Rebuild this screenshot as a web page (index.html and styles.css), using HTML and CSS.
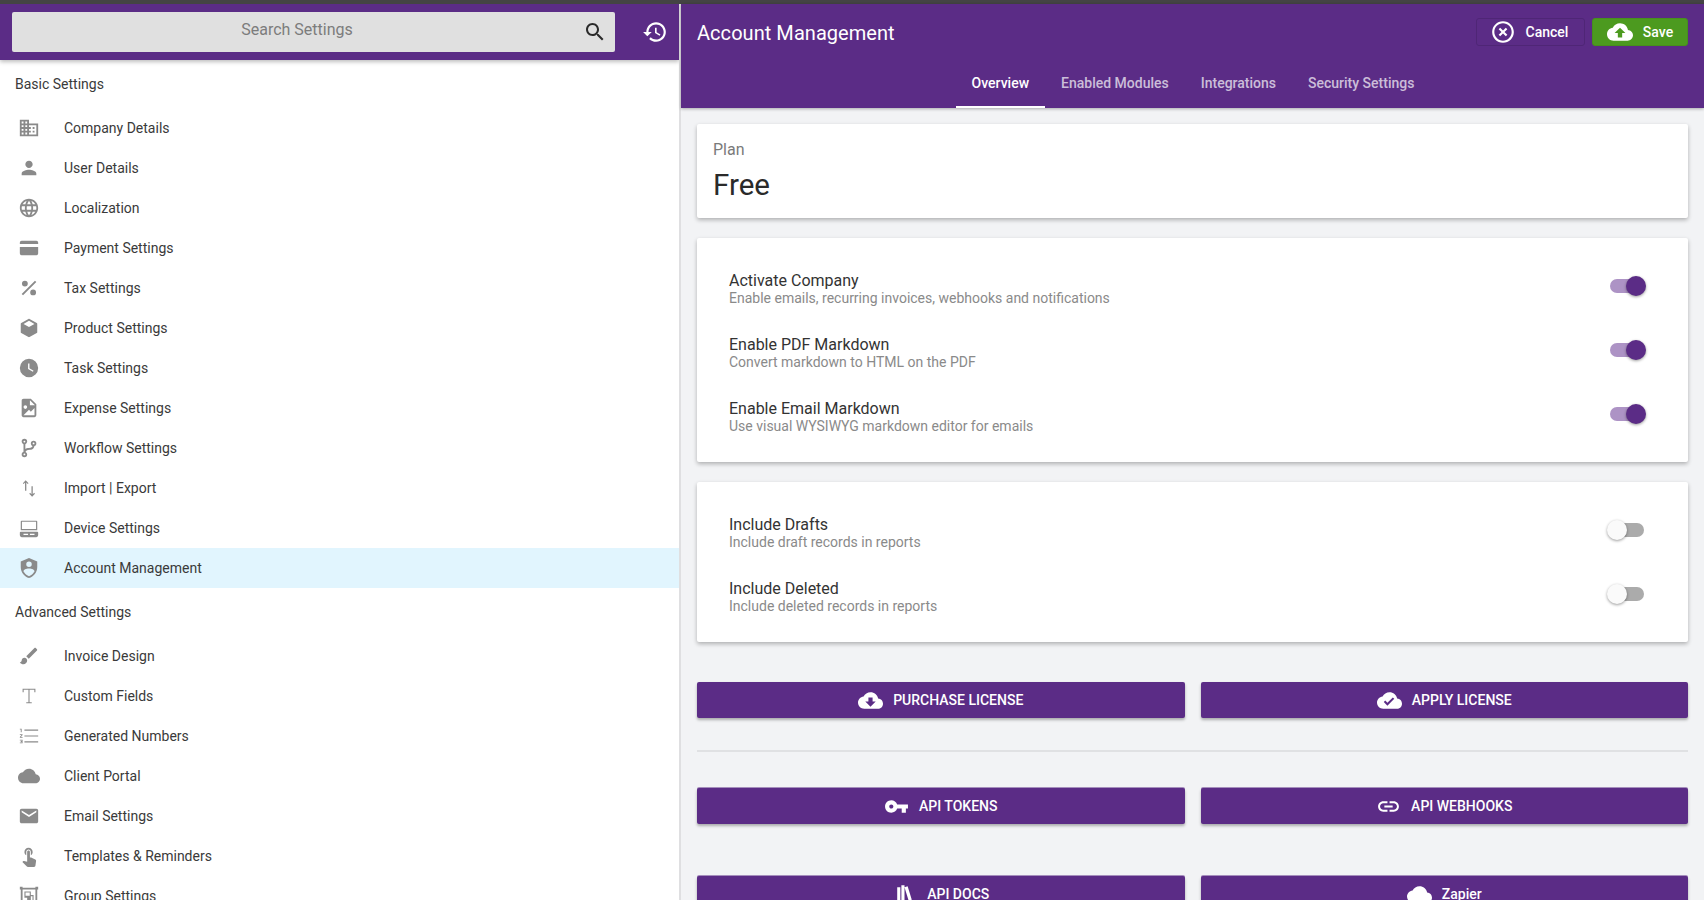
FILE: index.html
```html
<!DOCTYPE html>
<html lang="en">
<head>
<meta charset="utf-8">
<title>Account Management</title>
<link rel="stylesheet" href="styles.css">
</head>
<body>
<div class="topstrip"></div>
<div class="app">
  <aside class="side">
    <header class="side-head">
      <div class="search">
        <span class="search-text">Search Settings</span>
        <svg class="search-icon" viewBox="0 0 24 24"><path d="M15.5 14h-.79l-.28-.27C15.41 12.59 16 11.11 16 9.5 16 5.91 13.09 3 9.5 3S3 5.91 3 9.5 5.91 16 9.5 16c1.61 0 3.09-.59 4.23-1.57l.27.28v.79l5 4.99L20.49 19l-4.99-5zm-6 0C7.01 14 5 11.99 5 9.5S7.01 5 9.5 5 14 7.01 14 9.5 11.99 14 9.5 14z"/></svg>
      </div>
      <svg class="history" viewBox="0 0 24 24"><path d="M13 3c-4.97 0-9 4.03-9 9H1l3.89 3.89.07.14L9 12H6c0-3.87 3.13-7 7-7s7 3.13 7 7-3.13 7-7 7c-1.93 0-3.68-.79-4.94-2.06l-1.42 1.42C8.27 19.99 10.51 21 13 21c4.97 0 9-4.03 9-9s-4.03-9-9-9zm-1 5v5l4.28 2.54.72-1.21-3.5-2.08V8H12z"/></svg>
    </header>
    <h2 class="section first">Basic Settings</h2>
    <nav class="list">
      <div class="item"><svg class="ico" viewBox="0 0 24 24"><path d="M12 7V3H2v18h20V7H12zM6 19H4v-2h2v2zm0-4H4v-2h2v2zm0-4H4V9h2v2zm0-4H4V5h2v2zm4 12H8v-2h2v2zm0-4H8v-2h2v2zm0-4H8V9h2v2zm0-4H8V5h2v2zm10 12h-8v-2h2v-2h-2v-2h2v-2h-2V9h8v10zm-2-8h-2v2h2v-2zm0 4h-2v2h2v-2z"/></svg>Company Details</div>
      <div class="item"><svg class="ico" viewBox="0 0 24 24"><path d="M12 12c2.21 0 4-1.79 4-4s-1.79-4-4-4-4 1.79-4 4 1.79 4 4 4zm0 2c-2.67 0-8 1.34-8 4v2h16v-2c0-2.66-5.33-4-8-4z"/></svg>User Details</div>
      <div class="item"><svg class="ico" viewBox="0 0 24 24"><path d="M11.99 2C6.47 2 2 6.48 2 12s4.47 10 9.99 10C17.52 22 22 17.52 22 12S17.52 2 11.99 2zm6.93 6h-2.95c-.32-1.25-.78-2.45-1.38-3.56 1.84.63 3.37 1.91 4.33 3.56zM12 4.04c.83 1.2 1.48 2.53 1.91 3.96h-3.82c.43-1.43 1.08-2.76 1.91-3.96zM4.26 14C4.1 13.36 4 12.69 4 12s.1-1.36.26-2h3.38c-.08.66-.14 1.32-.14 2 0 .68.06 1.34.14 2H4.26zm.82 2h2.95c.32 1.25.78 2.45 1.38 3.56-1.84-.63-3.37-1.9-4.33-3.56zm2.95-8H5.08c.96-1.66 2.49-2.93 4.33-3.56C8.81 5.55 8.35 6.75 8.03 8zM12 19.96c-.83-1.2-1.48-2.53-1.91-3.96h3.82c-.43 1.43-1.08 2.76-1.91 3.96zM14.34 14H9.66c-.09-.66-.16-1.32-.16-2 0-.68.07-1.35.16-2h4.68c.09.65.16 1.32.16 2 0 .68-.07 1.34-.16 2zm.25 5.56c.6-1.11 1.06-2.31 1.38-3.56h2.95c-.96 1.65-2.49 2.93-4.33 3.56zM16.36 14c.08-.66.14-1.32.14-2 0-.68-.06-1.34-.14-2h3.38c.16.64.26 1.31.26 2s-.1 1.36-.26 2h-3.38z"/></svg>Localization</div>
      <div class="item"><svg class="ico" viewBox="0 0 24 24"><path d="M4 4h16a2 2 0 0 1 2 2v1.600H2V6a2 2 0 0 1 2-2zM2 11h20v7a2 2 0 0 1-2 2H4a2 2 0 0 1-2-2z"/></svg>Payment Settings</div>
      <div class="item"><svg class="ico" viewBox="0 0 24 24"><path d="M18.500 4l1.500 1.500L5.500 20 4 18.500zM7.500 4a3.200 3.200 0 1 1 0 6.400 3.200 3.200 0 0 1 0-6.400zM16.500 13.600a3.200 3.200 0 1 1 0 6.400 3.200 3.200 0 0 1 0-6.400z"/></svg>Tax Settings</div>
      <div class="item"><svg class="ico" viewBox="0 0 24 24"><path d="M21,16.5C21,16.88 20.79,17.21 20.47,17.38L12.57,21.82C12.41,21.94 12.21,22 12,22C11.79,22 11.59,21.94 11.43,21.82L3.53,17.38C3.21,17.21 3,16.88 3,16.5V7.5C3,7.12 3.21,6.79 3.53,6.62L11.43,2.18C11.59,2.06 11.79,2 12,2C12.21,2 12.41,2.06 12.57,2.18L20.47,6.62C20.79,6.79 21,7.12 21,7.5V16.5M12,4.15L6.04,7.5L12,10.85L17.96,7.5L12,4.15Z"/></svg>Product Settings</div>
      <div class="item"><svg class="ico" viewBox="0 0 24 24"><path d="M12,2A10,10 0 0,0 2,12A10,10 0 0,0 12,22A10,10 0 0,0 22,12A10,10 0 0,0 12,2M16.2,16.2L11,13V7H12.5V12.2L17,14.9L16.2,16.2Z"/></svg>Task Settings</div>
      <div class="item"><svg class="ico" viewBox="0 0 24 24"><path d="M13,9H18.5L13,3.5V9M6,2H14L20,8V20A2,2 0 0,1 18,22H6C4.89,22 4,21.1 4,20V4C4,2.89 4.89,2 6,2M6,20H15L18,20V12L14,16L12,14L6,20M8,9A2,2 0 0,0 6,11A2,2 0 0,0 8,13A2,2 0 0,0 10,11A2,2 0 0,0 8,9Z"/></svg>Expense Settings</div>
      <div class="item"><svg class="ico" viewBox="0 0 24 24"><path d="M13,14C9.64,14 8.54,15.35 8.18,16.24C9.25,16.7 10,17.76 10,19A3,3 0 0,1 7,22A3,3 0 0,1 4,19C4,17.69 4.83,16.58 6,16.17V7.83C4.83,7.42 4,6.31 4,5A3,3 0 0,1 7,2A3,3 0 0,1 10,5C10,6.31 9.17,7.42 8,7.83V13.12C8.88,12.47 10.16,12 12,12C14.67,12 15.56,10.66 15.85,9.77C14.77,9.32 14,8.25 14,7A3,3 0 0,1 17,4A3,3 0 0,1 20,7C20,8.34 19.12,9.5 17.91,9.86C17.65,11.29 16.68,14 13,14M7,18A1,1 0 0,0 6,19A1,1 0 0,0 7,20A1,1 0 0,0 8,19A1,1 0 0,0 7,18M7,4A1,1 0 0,0 6,5A1,1 0 0,0 7,6A1,1 0 0,0 8,5A1,1 0 0,0 7,4M17,6A1,1 0 0,0 16,7A1,1 0 0,0 17,8A1,1 0 0,0 18,7A1,1 0 0,0 17,6Z"/></svg>Workflow Settings</div>
      <div class="item"><svg class="ico" viewBox="0 0 24 24"><path d="M8.400 3.500l3.100 3.300-.9.900-1.500-1.600V15H7.700V6.100L6.200 7.700l-.9-.9zM15.400 21.500l-3.100-3.300.9-.9 1.500 1.600V10h1.400v8.900l1.500-1.600.9.900z"/></svg>Import | Export</div>
      <div class="item"><svg class="ico" viewBox="0 0 24 24"><path d="M4 4h16a1 1 0 0 1 1 1v9.500H3V5a1 1 0 0 1 1-1zm.3 1.300v7.900h15.400V5.300zM3 16h18a1 1 0 0 1 1 1v3a2 2 0 0 1-2 2H4a2 2 0 0 1-2-2v-3a1 1 0 0 1 1-1zm3 2.400v1.300h5v-1.300zm7 0v1.300h5v-1.300z" fill-rule="evenodd"/></svg>Device Settings</div>
      <div class="item active"><svg class="ico" viewBox="0 0 24 24"><path d="M12,1L3,5V11C3,16.55 6.84,21.74 12,23C17.16,21.74 21,16.55 21,11V5L12,1M12,5A3,3 0 0,1 15,8A3,3 0 0,1 12,11A3,3 0 0,1 9,8A3,3 0 0,1 12,5M17.13,17C15.92,18.85 14.11,20.24 12,20.92C9.89,20.24 8.08,18.85 6.87,17C6.53,16.5 6.24,16 6,15.47C6,13.82 8.71,12.47 12,12.47C15.29,12.47 18,13.79 18,15.47C17.76,16 17.47,16.5 17.13,17Z"/></svg>Account Management</div>
    </nav>
    <h2 class="section">Advanced Settings</h2>
    <nav class="list">
      <div class="item"><svg class="ico" viewBox="0 0 24 24"><path d="M7 14c-1.66 0-3 1.34-3 3 0 1.31-1.16 2-2 2 .92 1.22 2.49 2 4 2 2.21 0 4-1.79 4-4 0-1.66-1.34-3-3-3zm13.71-9.37l-1.34-1.34c-.39-.39-1.02-.39-1.41 0L9 12.25 11.75 15l8.96-8.96c.39-.39.39-1.03 0-1.41z"/></svg>Invoice Design</div>
      <div class="item"><svg class="ico" viewBox="0 0 24 24"><path d="M5 4h14v4h-1.200V5.200h-5.200v13.600H15V20H9v-1.200h2.400V5.200H6.200V8H5z"/></svg>Custom Fields</div>
      <div class="item"><svg class="ico" viewBox="0 0 24 24"><path d="M2 17h2v.5H3v1h1v.5H2v1h3v-4H2v1zm1-9h1V4H2v1h1v3zm-1 3h1.800L2 13.100v.9h3v-1H3.200L5 10.900V10H2v1zM7 5h15v1.300H7zm0 12.700h15V19H7zm0-6.350h15v1.300H7z"/></svg>Generated Numbers</div>
      <div class="item"><svg class="ico" viewBox="0 0 24 24"><path d="M19.35 10.04C18.67 6.59 15.64 4 12 4 9.11 4 6.64 5.64 5.35 8.04 2.34 8.36 0 10.91 0 14c0 3.31 2.69 6 6 6h13c2.76 0 5-2.24 5-5 0-2.64-2.05-4.78-4.65-4.96z"/></svg>Client Portal</div>
      <div class="item"><svg class="ico" viewBox="0 0 24 24"><path d="M20 4H4c-1.1 0-1.99.9-1.99 2L2 18c0 1.1.9 2 2 2h16c1.1 0 2-.9 2-2V6c0-1.1-.9-2-2-2zm0 4l-8 5-8-5V6l8 5 8-5v2z"/></svg>Email Settings</div>
      <div class="item"><svg class="ico" viewBox="0 0 24 24"><path d="M9 11.24V7.5C9 6.12 10.12 5 11.5 5S14 6.12 14 7.5v3.74c1.21-.81 2-2.18 2-3.74C16 5.01 13.99 3 11.5 3S7 5.01 7 7.5c0 1.56.79 2.93 2 3.74zm9.84 4.63l-4.54-2.26c-.17-.07-.35-.11-.54-.11H13v-6c0-.83-.67-1.5-1.5-1.5S10 6.67 10 7.5v10.74l-3.43-.72c-.08-.01-.15-.03-.24-.03-.31 0-.59.13-.79.33l-.79.8 4.94 4.94c.27.27.65.44 1.06.44h6.79c.75 0 1.33-.55 1.44-1.28l.75-5.27c.01-.07.02-.14.02-.2 0-.62-.38-1.16-.91-1.38z"/></svg>Templates &amp; Reminders</div>
      <div class="item"><svg class="ico" viewBox="0 0 24 24"><path d="M2 2h3v1h14V2h3v3h-1v14h1v3h-3v-1H5v1H2v-3h1V5H2zm3 3v14h14V5zm2 2h7v4h3v7h-7v-4H7zm1.200 1.200v3.600h4.600V8.200zm5.800 4v4.600h1.800v-4.600z" fill-rule="evenodd"/></svg>Group Settings</div>
    </nav>
  </aside>
  <main class="pane">
    <header class="pane-head">
      <div class="title-row">
        <h1 class="title">Account Management</h1>
        <button class="act cancel"><svg class="act-ico" viewBox="0 0 24 24"><path d="M14.59 8L12 10.59 9.41 8 8 9.41 10.59 12 8 14.59 9.41 16 12 13.41 14.59 16 16 14.59 13.41 12 16 9.41 14.59 8zM12 2C6.47 2 2 6.47 2 12s4.47 10 10 10 10-4.47 10-10S17.53 2 12 2zm0 18c-4.41 0-8-3.59-8-8s3.59-8 8-8 8 3.59 8 8-3.59 8-8 8z"/></svg>Cancel</button>
        <button class="act save"><svg class="act-ico" viewBox="0 0 24 24"><path d="M19.35 10.04C18.67 6.59 15.64 4 12 4 9.11 4 6.64 5.64 5.35 8.04 2.34 8.36 0 10.91 0 14c0 3.31 2.69 6 6 6h13c2.76 0 5-2.24 5-5 0-2.64-2.05-4.78-4.65-4.96zM14 13v4h-4v-4H7l5-5 5 5h-3z"/></svg>Save</button>
      </div>
      <div class="tabs">
        <div class="tab on">Overview</div>
        <div class="tab">Enabled Modules</div>
        <div class="tab">Integrations</div>
        <div class="tab">Security Settings</div>
      </div>
    </header>
    <div class="body">
      <section class="card plan">
        <div class="plan-label">Plan</div>
        <div class="plan-value">Free</div>
      </section>
      <section class="card rows">
        <div class="row"><div class="row-text"><div class="row-title">Activate Company</div><div class="row-sub">Enable emails, recurring invoices, webhooks and notifications</div></div><span class="switch on"></span></div>
        <div class="row"><div class="row-text"><div class="row-title">Enable PDF Markdown</div><div class="row-sub">Convert markdown to HTML on the PDF</div></div><span class="switch on"></span></div>
        <div class="row"><div class="row-text"><div class="row-title">Enable Email Markdown</div><div class="row-sub">Use visual WYSIWYG markdown editor for emails</div></div><span class="switch on"></span></div>
      </section>
      <section class="card rows">
        <div class="row"><div class="row-text"><div class="row-title">Include Drafts</div><div class="row-sub">Include draft records in reports</div></div><span class="switch"></span></div>
        <div class="row"><div class="row-text"><div class="row-title">Include Deleted</div><div class="row-sub">Include deleted records in reports</div></div><span class="switch"></span></div>
      </section>
      <div class="btns first-btns">
        <button class="btn"><svg class="btn-ico" viewBox="0 0 24 24"><path d="M19.35 10.04C18.67 6.59 15.64 4 12 4 9.11 4 6.64 5.64 5.35 8.04 2.34 8.36 0 10.91 0 14c0 3.31 2.69 6 6 6h13c2.76 0 5-2.24 5-5 0-2.64-2.05-4.78-4.65-4.96zM17 13l-5 5-5-5h3V9h4v4h3z"/></svg>PURCHASE LICENSE</button>
        <button class="btn"><svg class="btn-ico" viewBox="0 0 24 24"><path d="M19.35 10.04C18.67 6.59 15.64 4 12 4 9.11 4 6.64 5.64 5.35 8.04 2.34 8.36 0 10.91 0 14c0 3.31 2.69 6 6 6h13c2.76 0 5-2.24 5-5 0-2.64-2.05-4.78-4.65-4.96zM10 17l-3.500-3.500 1.410-1.410L10 14.170 15.180 9l1.410 1.410L10 17z"/></svg>APPLY LICENSE</button>
      </div>
      <hr class="rule">
      <div class="btns soft">
        <button class="btn"><svg class="btn-ico" viewBox="0 0 24 24"><path d="M12.65 10C11.83 7.67 9.61 6 7 6c-3.31 0-6 2.690-6 6s2.690 6 6 6c2.610 0 4.830-1.670 5.650-4H17v4h4v-4h2v-4H12.650zM7 14c-1.100 0-2-.9-2-2s.9-2 2-2 2 .9 2 2-.9 2-2 2z"/></svg>API TOKENS</button>
        <button class="btn"><svg class="btn-ico" viewBox="0 0 24 24"><path d="M3.900 12c0-1.710 1.390-3.100 3.100-3.100h4V7H7c-2.760 0-5 2.240-5 5s2.240 5 5 5h4v-1.900H7c-1.710 0-3.100-1.390-3.100-3.100zM8 13h8v-2H8v2zm9-6h-4v1.900h4c1.710 0 3.100 1.390 3.100 3.100s-1.390 3.100-3.100 3.100h-4V17h4c2.760 0 5-2.240 5-5s-2.240-5-5-5z"/></svg>API WEBHOOKS</button>
      </div>
      <div class="btns soft last-btns">
        <button class="btn"><svg class="btn-ico" viewBox="0 0 24 24"><path d="M9 3V18H12V3H9M12 5L16 18L19 17L15 4L12 5M5 5V18H8V5H5M3 19V21H21V19H3Z"/></svg>API DOCS</button>
        <button class="btn plain"><svg class="btn-ico" viewBox="0 0 24 24"><path d="M19.35 10.04C18.67 6.59 15.64 4 12 4 9.11 4 6.64 5.64 5.35 8.04 2.34 8.36 0 10.91 0 14c0 3.31 2.69 6 6 6h13c2.76 0 5-2.24 5-5 0-2.64-2.05-4.78-4.65-4.96z"/></svg>Zapier</button>
      </div>
    </div>
  </main>
</div>
</body>
</html>
```

FILE: styles.css
```css
* { box-sizing: border-box; }
html, body { margin: 0; height: 900px; overflow: hidden; }
body { font-family: Roboto, "Liberation Sans", sans-serif; color: #333; background: #fff; display: flex; flex-direction: column; }
.topstrip { height: 4px; background: #444; flex: none; }
.app { flex: 1; display: flex; min-height: 0; }

.side { width: 679px; flex: none; background: #fff; overflow: hidden; }
.side-head { height: 56px; background: #5b2c86; display: flex; align-items: center; padding-left: 12px; box-shadow: 0 2px 4px rgba(0,0,0,.25); position: relative; }
.search { width: 603px; height: 40px; background: #e0e0e0; border-radius: 2px; position: relative; display: flex; align-items: center; justify-content: center; padding-right: 33px; }
.search-text { font-size: 16px; color: #7c7c7c; margin-top: -5px; }
.search-icon { width: 24px; height: 24px; fill: #2b2b2b; position: absolute; right: 8px; top: 8px; }
.history { width: 26px; height: 26px; fill: #fff; margin-left: 27px; }
.section { margin: 14px 0; font-size: 14px; font-weight: 400; color: #3a3a3a; padding-left: 15px; line-height: 20px; }
.item { height: 40px; display: flex; align-items: center; padding-left: 18px; font-size: 14px; color: #3a3a3a; }
.item.active { background: #e1f5fe; }
.ico { width: 22px; height: 22px; fill: #8a8a8a; margin-right: 24px; flex: none; }

.pane { flex: 1; min-width: 0; border-left: 2px solid #dfdfe1; background: #f2f3f5; display: flex; flex-direction: column; }
.pane-head { height: 104px; flex: none; background: #5b2c86; color: #fff; box-shadow: 0 1px 3px rgba(0,0,0,.3); position: relative; }
.title-row { height: 56px; display: flex; align-items: center; padding: 0 16px; }
.title { flex: 1; margin: 0; font-size: 20px; font-weight: 400; letter-spacing: .05px; padding-top: 1px; }
.act { height: 28px; border-radius: 3px; border: 1px solid transparent; color: #fff; font: 500 14px Roboto, sans-serif; display: flex; align-items: center; justify-content: center; padding: 0; }
.act-ico { width: 26px; height: 26px; fill: #fff; margin-right: 10px; }
.cancel { width: 109px; background: transparent; border-color: #4f2676; margin-right: 7px; padding-right: 3px; }
.save { width: 96px; background: #4c9a1f; border-color: #478f1d; }
.tabs { height: 48px; display: flex; justify-content: center; padding-left: 1px; }
.tab { padding: 0 16px; font-size: 14px; font-weight: 500; color: rgba(255,255,255,.7); display: flex; align-items: center; height: 48px; padding-bottom: 2px; }
.tab.on { color: #fff; border-bottom: 2px solid #fff; padding-bottom: 0; }

.body { padding: 16px; flex: 1; min-height: 0; overflow: hidden; }
.card { background: #fff; border-radius: 2px; box-shadow: 0 2px 4px rgba(0,0,0,.28); margin-bottom: 20px; }
.plan { height: 94px; padding: 16px; }
.plan-label { font-size: 16px; color: #7a7a7a; line-height: 19px; }
.plan-value { font-size: 29.5px; line-height: 34px; margin-top: 9px; color: #2a2a2a; }
.rows { padding: 16px 0; }
.row { height: 64px; display: flex; align-items: center; padding-left: 32px; padding-right: 44px; }
.row-text { flex: 1; padding-top: 6px; }
.row-title { font-size: 16px; line-height: 19px; color: #333; }
.row-sub { font-size: 14px; line-height: 17px; color: #8a8a8a; }
.switch { width: 34px; height: 14px; border-radius: 7px; background: #ababab; position: relative; flex: none; }
.switch::after { content: ""; position: absolute; width: 20px; height: 20px; border-radius: 50%; top: -3px; left: -3px; background: #fafafa; box-shadow: 0 1px 3px rgba(0,0,0,.4); }
.switch.on { background: #ad93c5; }
.switch.on::after { left: 16px; background: #5b2c86; }

.btns { display: grid; grid-template-columns: 1fr 1fr; gap: 16px; }
.first-btns { margin-top: 40px; }
.last-btns { margin-top: 52px; }
.btn { height: 36px; background: #5b2c86; color: #fff; border: 0; border-radius: 2px; font: 500 14px Roboto, sans-serif; display: flex; align-items: center; justify-content: center; box-shadow: 0 2px 3px rgba(0,0,0,.3); padding: 0; }
.soft .btn { box-shadow: 0 -1px 0 rgba(91,44,134,.5), 0 2px 3px rgba(0,0,0,.3); }
.btn-ico { width: 25px; height: 25px; fill: #fff; margin-right: 10px; }
.rule { border: 0; height: 2px; background: #e0e1e3; margin: 32px 0 36px; }
```
